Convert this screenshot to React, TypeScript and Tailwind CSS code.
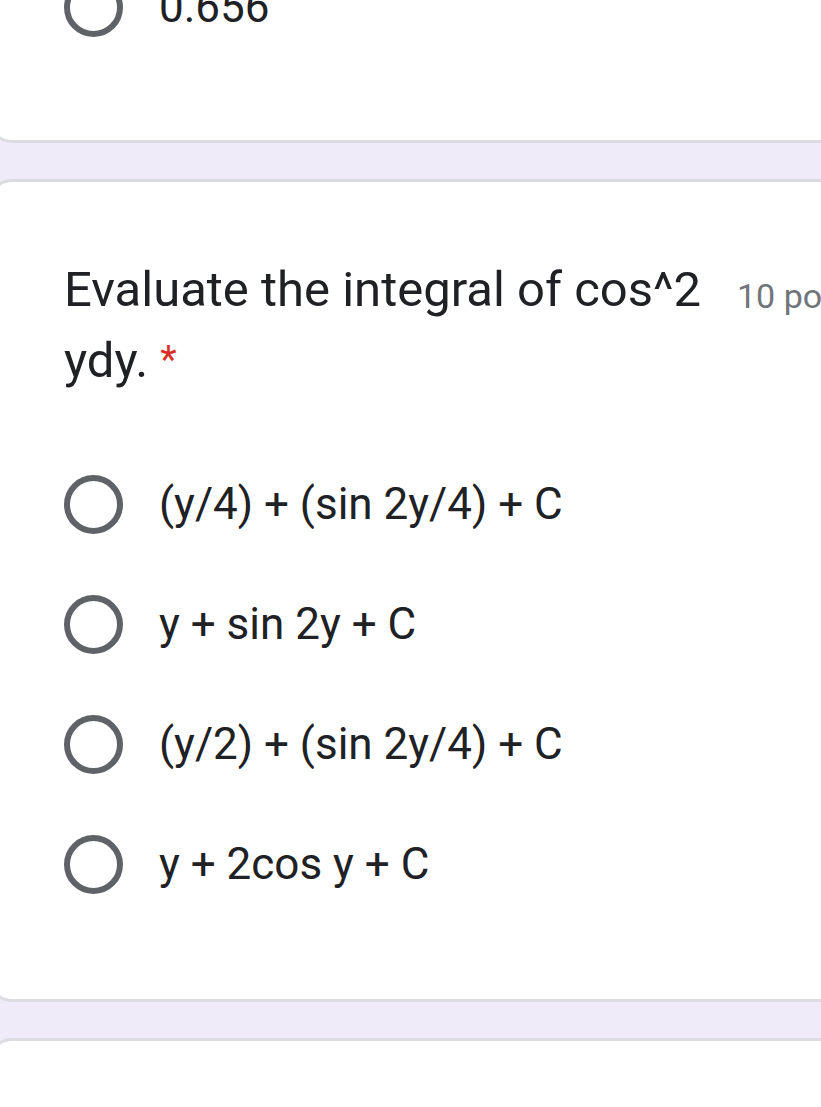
const options = [
  "(y/4) + (sin 2y/4) + C",
  "y + sin 2y + C",
  "(y/2) + (sin 2y/4) + C",
  "y + 2cos y + C",
];

function Radio() {
  return <div className="h-[59px] w-[59px] shrink-0 rounded-full border-[6px] border-[#5f6368]" />;
}

function OptionRow({ label }: { label: string }) {
  return (
    <div className="flex h-[120px] items-center gap-[36px]">
      <Radio />
      <span className="text-[44px] leading-none text-[#202124]">{label}</span>
    </div>
  );
}

export default function App() {
  return (
    <div
      className="h-[1107px] w-[821px] overflow-hidden bg-[#f0ebf8]"
      style={{ fontFamily: "Roboto, 'Noto Sans', sans-serif" }}
    >
      {/* previous question, scrolled mostly out of view */}
      <div className="-mt-[56px] -ml-[12px] w-[920px] rounded-[24px] border-[3px] border-[#dadce0] bg-white pb-[73px] pl-[73px]">
        <OptionRow label="0.656" />
      </div>

      {/* current question */}
      <div className="mt-[36px] -ml-[12px] w-[920px] rounded-[24px] border-[3px] border-[#dadce0] bg-white pt-[72px] pb-[75px] pl-[73px]">
        <div className="flex items-start">
          <div className="w-[652px] text-[49px] leading-[71px] text-[#202124]">
            Evaluate the integral of cos^2 ydy.{" "}
            <span className="relative -top-[4px] text-[38px] text-[#d93025]">*</span>
          </div>
          <div className="mt-[17px] ml-[21px] shrink-0 text-[34px] leading-normal text-[#70757a]">
            10 points
          </div>
        </div>
        <div className="mt-[44px]">
          {options.map((o) => (
            <OptionRow key={o} label={o} />
          ))}
        </div>
      </div>

      {/* next question */}
      <div className="mt-[36px] -ml-[12px] h-[200px] w-[920px] rounded-[24px] border-[3px] border-[#dadce0] bg-white" />
    </div>
  );
}
